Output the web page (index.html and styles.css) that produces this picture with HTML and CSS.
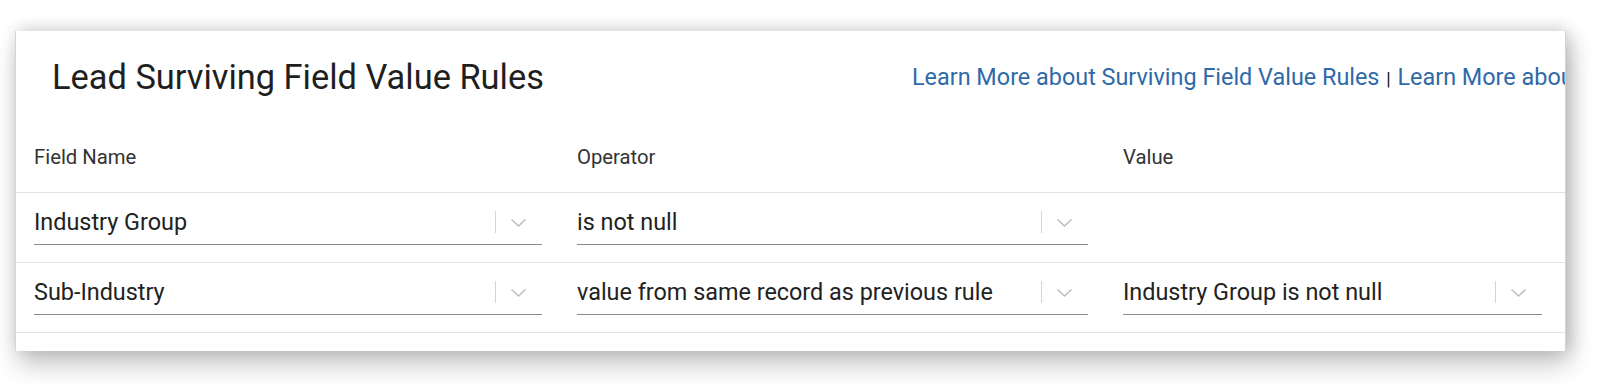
FILE: index.html
```html
<!DOCTYPE html>
<html lang="en">
  <head>
    <meta charset="UTF-8" />
    <meta name="viewport" content="width=device-width, initial-scale=1.0" />
    <title>Lead Surviving Field Value Rules</title>
    <link rel="stylesheet" href="styles.css">
  </head>
  <body>
    <div class="card">
      <!-- 제목 + 도움말 링크 -->
      <div class="card-head">
        <h1>Lead Surviving Field Value Rules</h1>
        <div class="links">
          <a href="#">Learn More about Surviving Field Value Rules</a>
          <span class="pipe">|</span>
          <a href="#">Learn More about Field Merge Rules</a>
        </div>
      </div>

      <div class="col-heads">
        <div>Field Name</div>
        <div>Operator</div>
        <div>Value</div>
      </div>

      <div class="rule-row">
        <div class="select">
          <span class="select-value">Industry Group</span>
          <span class="select-sep"></span>
          <svg class="chevron" viewBox="0 0 17 10"><path d="M1.5 1.5 L8.5 8 L15.5 1.5" /></svg>
        </div>
        <div class="select">
          <span class="select-value">is not null</span>
          <span class="select-sep"></span>
          <svg class="chevron" viewBox="0 0 17 10"><path d="M1.5 1.5 L8.5 8 L15.5 1.5" /></svg>
        </div>
        <div></div>
      </div>

      <div class="rule-row">
        <div class="select">
          <span class="select-value">Sub-Industry</span>
          <span class="select-sep"></span>
          <svg class="chevron" viewBox="0 0 17 10"><path d="M1.5 1.5 L8.5 8 L15.5 1.5" /></svg>
        </div>
        <div class="select">
          <span class="select-value">value from same record as previous rule</span>
          <span class="select-sep"></span>
          <svg class="chevron" viewBox="0 0 17 10"><path d="M1.5 1.5 L8.5 8 L15.5 1.5" /></svg>
        </div>
        <div class="select">
          <span class="select-value">Industry Group is not null</span>
          <span class="select-sep"></span>
          <svg class="chevron" viewBox="0 0 17 10"><path d="M1.5 1.5 L8.5 8 L15.5 1.5" /></svg>
        </div>
      </div>

      <div class="card-foot"></div>
    </div>
  </body>
</html>
```

FILE: styles.css
```css
html {
  height: 100%;
}

body {
  font-family: Roboto, "Liberation Sans", Arial, sans-serif;
  margin: 0;
  padding: 31px 0 0 15px;
  min-height: 100%;
  box-sizing: border-box;
  overflow: hidden;
  background-color: #ffffff;
  color: #212121;
}

.card {
  width: 1551px;
  height: 320px;
  box-sizing: border-box;
  background: white;
  border-left: 1px solid #d4d4d4;
  border-right: 1px solid #d4d4d4;
  box-shadow: 3px 14px 24px rgba(0, 0, 0, 0.22), 6px 0 16px rgba(0, 0, 0, 0.12),
    0 -6px 14px rgba(0, 0, 0, 0.06);
  overflow: hidden;
}

.card-head {
  display: flex;
  align-items: center;
  height: 91px;
  padding-left: 36px;
  white-space: nowrap;
}

h1 {
  flex: 0 0 860px;
  margin: 0;
  font-size: 34.4px;
  font-weight: 400;
  color: #1f1f1f;
}

.links {
  flex: 0 0 auto;
  font-size: 23.4px;
  padding-top: 1px;
}

.links a {
  color: #2f69a7;
  text-decoration: none;
}

.pipe {
  font-size: 18px;
  color: #111;
  margin: 0 1px;
}

.col-heads,
.rule-row {
  display: grid;
  grid-template-columns: 508px 511px 419px;
  column-gap: 35px;
  padding-left: 18px;
  border-bottom: 1px solid #e2e2e2;
}

.col-heads {
  height: 70px;
  align-items: center;
  font-size: 20.3px;
  color: #333;
}

.rule-row {
  padding-top: 16px;
  padding-bottom: 17px;
}

.select {
  display: flex;
  align-items: center;
  line-height: 26px;
  padding-bottom: 9px;
  border-bottom: 1px solid #8c8c8c;
  font-size: 23.4px;
  color: #222;
}

.select-value {
  flex: 1;
}

.select-sep {
  width: 1px;
  height: 22px;
  background-color: #d6d6d6;
}

.chevron {
  width: 17px;
  height: 10px;
  margin: 1px 15px 0 14px;
  fill: none;
  stroke: #bdbdbd;
  stroke-width: 1.6;
}

.card-foot {
  height: 16px;
}
```
